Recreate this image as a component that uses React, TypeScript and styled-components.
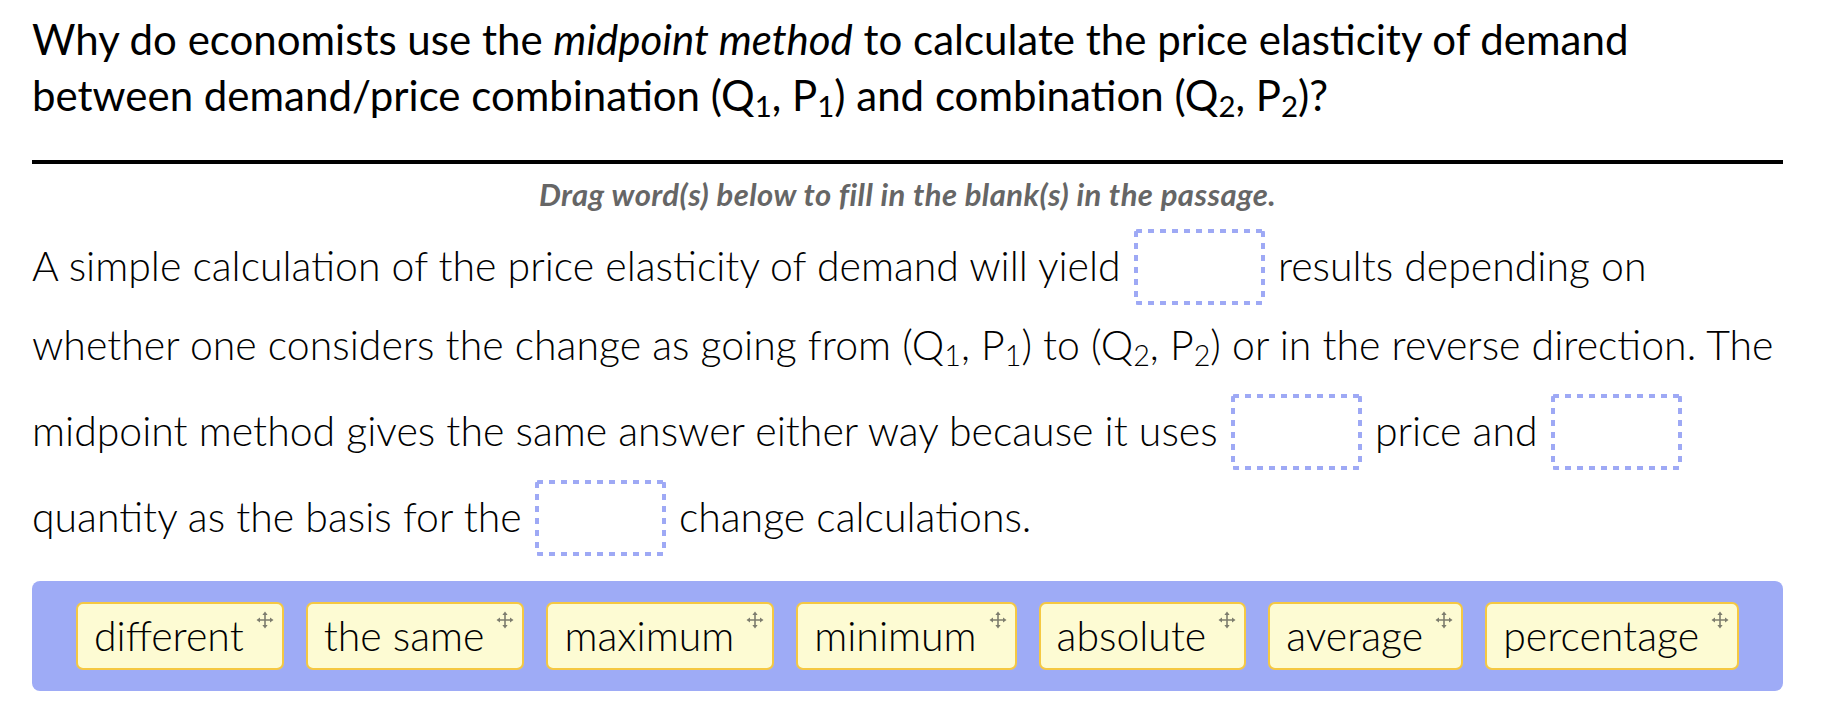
import styled, { createGlobalStyle } from "styled-components"

const GlobalStyle = createGlobalStyle`
  html, body {
    margin: 0;
    padding: 0;
    background: #ffffff;
  }
  body {
    font-family: Lato, "Noto Sans", "Liberation Sans", sans-serif;
    color: #000;
  }
`

const WORDS = ["different", "the same", "maximum", "minimum", "absolute", "average", "percentage"]

// 드래그 앤 드롭 빈칸 채우기 문제
const App = () => {
  return (
    <>
      <GlobalStyle />
      <StyledPage>
        <StyledQuestion>
          Why do economists use the <em>midpoint method</em> to calculate the price elasticity of demand
          <br />
          between demand/price combination (Q<sub>1</sub>, P<sub>1</sub>) and combination (Q<sub>2</sub>, P<sub>2</sub>)?
        </StyledQuestion>

        <StyledRule />

        <StyledInstruction>Drag word(s) below to fill in the blank(s) in the passage.</StyledInstruction>

        <StyledPassage>
          A simple calculation of the price elasticity of demand will yield <StyledBlank /> results depending on
          <br />
          whether one considers the change as going from (Q<sub>1</sub>, P<sub>1</sub>) to (Q<sub>2</sub>, P
          <sub>2</sub>) or in the reverse direction. The
          <br />
          midpoint method gives the same answer either way because it uses <StyledBlank /> price and <StyledBlank />
          <br />
          quantity as the basis for the <StyledBlank /> change calculations.
        </StyledPassage>

        <StyledWordBank>
          {WORDS.map((word) => (
            <StyledTile key={word}>
              <StyledWord>{word}</StyledWord>
              <MoveIcon />
            </StyledTile>
          ))}
        </StyledWordBank>
      </StyledPage>
    </>
  )
}

export default App

const MoveIcon = () => (
  <StyledIcon viewBox="0 0 18 18" aria-hidden="true">
    <path d="M9 3.5V14.5M3.5 9H14.5" stroke="currentColor" strokeWidth="1.6" />
    <path d="M9 0.5L6.4 4H11.6Z" fill="currentColor" />
    <path d="M9 17.5L6.4 14H11.6Z" fill="currentColor" />
    <path d="M0.5 9L4 6.4V11.6Z" fill="currentColor" />
    <path d="M17.5 9L14 6.4V11.6Z" fill="currentColor" />
  </StyledIcon>
)

const StyledPage = styled.div`
  width: 1751px;
  padding: 11px 0 0 32px;
`

const StyledQuestion = styled.h1`
  margin: 0;
  font-size: 42px;
  font-weight: 400;
  line-height: 56px;
  white-space: nowrap;

  em {
    font-style: italic;
  }

  sub {
    font-size: 0.7em;
    line-height: 0;
    vertical-align: -0.2em;
  }
`

const StyledRule = styled.div`
  height: 4px;
  margin-top: 37px;
  background: #000;
`

const StyledInstruction = styled.div`
  margin-top: 13px;
  text-align: center;
  font-size: 31px;
  letter-spacing: 0.45px;
  line-height: 34px;
  font-weight: 700;
  font-style: italic;
  color: #666;
`

const StyledPassage = styled.div`
  margin-top: 8px;
  font-size: 41px;
  font-weight: 300;
  line-height: 79px;
  white-space: nowrap;

  sub {
    font-size: 0.7em;
    line-height: 0;
    vertical-align: -0.2em;
  }
`

const dots = "#9ea9f5"

const StyledBlank = styled.span`
  display: inline-block;
  box-sizing: border-box;
  width: 131px;
  height: 76px;
  margin: 10px 2px 0;
  vertical-align: -24px;
  border-radius: 4px;
  background:
    repeating-linear-gradient(to right, ${dots} 0 6px, transparent 6px 12px) left 2px top / calc(100% - 4px) 4px no-repeat,
    repeating-linear-gradient(to right, ${dots} 0 6px, transparent 6px 12px) left 2px bottom / calc(100% - 4px) 4px no-repeat,
    repeating-linear-gradient(to bottom, ${dots} 0 6px, transparent 6px 12px) left top 2px / 4px calc(100% - 4px) no-repeat,
    repeating-linear-gradient(to bottom, ${dots} 0 6px, transparent 6px 12px) right top 2px / 4px calc(100% - 4px) no-repeat;
`

const StyledWordBank = styled.div`
  margin-top: 25px;
  display: flex;
  justify-content: center;
  gap: 22px;
  padding: 21px 0 21px;
  background: #9eabf6;
  border-radius: 8px;
`

const StyledTile = styled.div`
  display: flex;
  align-items: flex-start;
  box-sizing: border-box;
  height: 68px;
  padding: 0 8px 0 16px;
  border: 2px solid #f5c842;
  border-radius: 7px;
  background: #fdfbd3;
`

const StyledWord = styled.span`
  font-size: 41px;
  font-weight: 300;
  line-height: 64px;
`

const StyledIcon = styled.svg`
  width: 18px;
  height: 18px;
  margin: 7px 0 0 12px;
  color: #7d7d6e;
`
